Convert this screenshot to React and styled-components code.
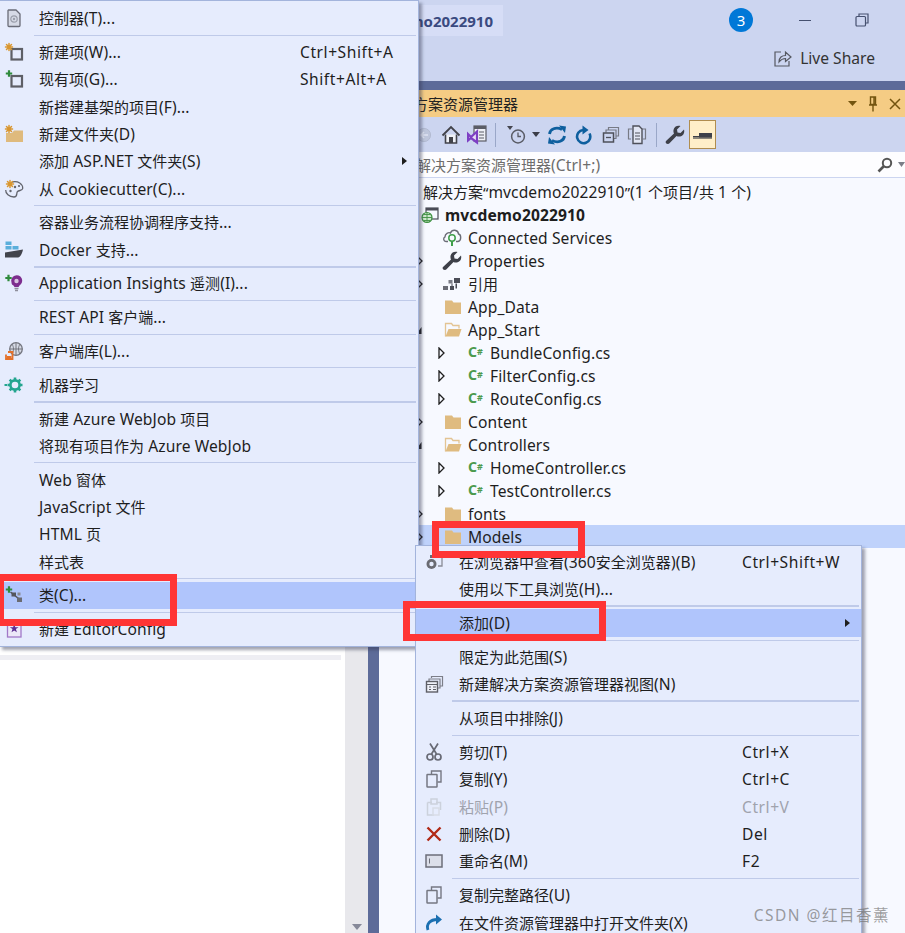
import React from "react";
import styled, { createGlobalStyle } from "styled-components";

const FONT = '"Noto Sans","Noto Sans CJK SC",sans-serif';

const Global = createGlobalStyle`
  html, body { margin: 0; padding: 0; background: #fff; }
  body { font-family: ${FONT}; font-size: 15px; color: #1e1e1e; }
`;

const Page = styled.div`
  position: relative;
  width: 905px;
  height: 933px;
  overflow: hidden;
  display: flex;
  flex-direction: column;
  background: #ccd5f0;
`;

/* Latin runs of the reference's UI font are wider than Noto Sans at the same size */
const Latin = styled.span`
  font-size: 15.6px;
  letter-spacing: ${(p) => p.$spacing ?? 0.1}px;
`;
const Txt = ({ children, spacing }) => (
  <>
    {String(children)
      .split(/([\u0000-\u024f]+)/)
      .filter(Boolean)
      .map((run, i) =>
        /^[\u0000-\u024f]/.test(run) ? (
          <Latin key={i} $spacing={spacing}>
            {run}
          </Latin>
        ) : (
          <span key={i}>{run}</span>
        )
      )}
  </>
);

/* ---------- title bar ---------- */
const TitleBar = styled.header`
  height: 81px;
  flex: none;
  display: grid;
  grid-template-columns: 503px 1fr;
  background: #ccd5f0;
`;
const TitleBox = styled.div`
  justify-self: end;
  height: 31px;
  margin-top: 5px;
  padding: 0 10px;
  display: flex;
  align-items: center;
  background: #d6ddf6;
  color: #3a4a80;
  font-weight: 700;
  font-size: 15px;
`;
const TitleRight = styled.div`
  display: flex;
  flex-direction: column;
`;
const WindowRow = styled.div`
  display: flex;
  align-items: center;
  height: 24px;
  margin-top: 8px;
  padding-left: 226px;
`;
const Badge = styled.div`
  width: 24px;
  height: 24px;
  border-radius: 50%;
  background: #0078d7;
  color: #fff;
  font-size: 15px;
  display: flex;
  align-items: center;
  justify-content: center;
`;
const MinimizeGlyph = styled.div`
  width: 12px;
  height: 1px;
  margin-left: 46px;
  background: #45506f;
`;
const RestoreSlot = styled.div`
  display: flex;
  margin-left: 44px;
`;
const ShareRow = styled.div`
  display: flex;
  align-items: center;
  justify-content: flex-end;
  gap: 8px;
  height: 24px;
  margin-top: 14px;
  padding-right: 30px;
  color: #333;
  font-size: 15px;
`;

/* ---------- workspace under the title bar ---------- */
const Workspace = styled.div`
  flex: 1;
  display: grid;
  grid-template-columns: 345px 23px 1fr;
  min-height: 0;
`;
const Editor = styled.div`
  background: #fff;
  padding-top: 574px;
`;
const EditorRule = styled.div`
  height: 5px;
  width: 341px;
  background: #eeeef3;
`;
const ScrollBar = styled.div`
  background: #e8e8ec;
  display: flex;
  flex-direction: column;
  justify-content: flex-end;
  align-items: center;
  padding-bottom: 3px;
`;
const ScrollArrow = styled.div`
  width: 0;
  height: 0;
  border-left: 5px solid transparent;
  border-right: 5px solid transparent;
  border-top: 6px solid #868999;
`;
const Explorer = styled.section`
  border-left: 11px solid #5d6b99;
  border-top: 9px solid #5d6b99;
  display: flex;
  flex-direction: column;
  background: #f7f9ff;
  min-height: 0;
`;
const ExplorerHeader = styled.div`
  height: 27px;
  flex: none;
  background: #f5cc84;
  display: flex;
  align-items: center;
  padding: 0 4px;
  color: #222;
  font-size: 15px;
`;
const HeaderTitle = styled.span`
  flex: 1;
`;
const HeaderIcons = styled.div`
  display: flex;
  align-items: center;
  gap: 11px;
`;
const Toolbar = styled.div`
  height: 35px;
  flex: none;
  background: #ccd5f0;
  display: flex;
  align-items: center;
  padding-left: 37px;
`;
const ToolIcon = styled.span`
  display: flex;
  width: ${(p) => p.$w || 18}px;
  height: 20px;
  margin-left: ${(p) => p.$gap || 0}px;
  align-items: center;
  justify-content: center;
`;
const ToolSep = styled.span`
  width: 1px;
  height: 24px;
  background: #9aa7c8;
  margin-left: ${(p) => p.$gap || 0}px;
`;
const ToggleButton = styled.span`
  width: 27px;
  height: 29px;
  box-sizing: border-box;
  margin-left: 4px;
  background: #ffefc9;
  border: 1px solid #b08d4f;
  display: flex;
  align-items: center;
  justify-content: center;
`;
const SearchBar = styled.div`
  height: 26px;
  flex: none;
  box-sizing: border-box;
  background: #fdfdff;
  border-bottom: 1px solid #ccd5f0;
  display: flex;
  align-items: center;
  padding: 0 0 0 7px;
  color: #6d6d6d;
  font-size: 15px;
`;
const SearchText = styled.span`
  flex: 1;
`;
const SearchIcons = styled.span`
  display: flex;
  align-items: center;
  gap: 5px;
`;
const Tree = styled.div`
  padding-top: 2px;
  display: flex;
  flex-direction: column;
`;
const TreeRow = styled.div`
  height: 23px;
  flex: none;
  display: flex;
  align-items: center;
  background: ${(p) => (p.$selected ? "#bfd2fb" : "transparent")};
  font-weight: ${(p) => (p.$bold ? 700 : 400)};
  font-size: 15px;
  white-space: nowrap;
`;
const TreeIndent = styled.div`
  display: flex;
  align-items: center;
  margin-left: ${(p) => p.$indent}px;
`;
const Expander = styled.span`
  width: 14px;
  height: 14px;
  display: flex;
  align-items: center;
  justify-content: center;
`;
const TreeIconSlot = styled.span`
  width: 42px;
  box-sizing: border-box;
  padding-right: 6px;
  display: flex;
  justify-content: flex-end;
  align-items: center;
`;
const CSharp = styled.span`
  width: 14px;
  margin-right: 2px;
  color: #4b9a4e;
  font-weight: 700;
  font-size: 14px;
  line-height: 15px;
  display: flex;
  align-items: baseline;
  & > small {
    font-size: 9px;
    position: relative;
    top: -2px;
  }
`;

/* ---------- context menus (float over everything) ---------- */
const Menu = styled.div`
  position: absolute;
  left: ${(p) => p.$left}px;
  top: ${(p) => p.$top}px;
  width: ${(p) => p.$width}px;
  box-sizing: border-box;
  padding-top: ${(p) => p.$padTop}px;
  padding-bottom: 3px;
  background: #e6ecfd;
  border: 1px solid #a3b4dc;
  box-shadow: 3px 3px 3px rgba(50, 55, 80, 0.45);
  z-index: 2;
`;
const MenuRow = styled.div`
  height: ${(p) => p.$rowH}px;
  display: grid;
  grid-template-columns: ${(p) => p.$iconCol}px 1fr ${(p) => p.$shortCol}px;
  align-items: center;
  background: ${(p) => (p.$active ? "#b0c5fc" : "transparent")};
  color: ${(p) => (p.$disabled ? "#a0a3ad" : "#1e1e1e")};
  font-size: 15px;
  white-space: nowrap;
`;
const MenuIcon = styled.span`
  display: flex;
  align-items: center;
  justify-content: center;
  width: ${(p) => p.$slot}px;
`;
const Shortcut = styled.span`
  display: flex;
  justify-content: space-between;
  align-items: center;
  padding-right: 11px;
`;
const Arrow = styled.span`
  margin-left: auto;
  width: 0;
  height: 0;
  border-top: 4px solid transparent;
  border-bottom: 4px solid transparent;
  border-left: 5px solid #1e1e1e;
`;
const MenuSep = styled.div`
  height: 6.5px;
  display: flex;
  align-items: center;
  padding-left: ${(p) => p.$inset}px;
  padding-right: 2px;
  &::after {
    content: "";
    flex: 1;
    height: ${(p) => (p.$thick ? 2 : 1)}px;
    background: #bfcae9;
  }
`;

/* ---------- red annotations and watermark ---------- */
const RedBox = styled.div`
  position: absolute;
  left: ${(p) => p.$x}px;
  top: ${(p) => p.$y}px;
  width: ${(p) => p.$w}px;
  height: ${(p) => p.$h}px;
  box-sizing: border-box;
  border: 7px solid #ff3535;
  border-left-width: ${(p) => p.$lw || 7}px;
  z-index: 3;
`;
const Watermark = styled.div`
  position: absolute;
  right: 15px;
  bottom: 7px;
  color: rgba(120, 120, 120, 0.72);
  font-size: 15.5px;
  letter-spacing: 1.5px;
  z-index: 4;
`;

/* ---------- icons ---------- */
const S = ({ w = 20, h = 20, children, vb }) => (
  <svg width={w} height={h} viewBox={vb || `0 0 ${w} ${h}`} fill="none" style={{ display: "block", flex: "none" }}>
    {children}
  </svg>
);
const Burst = ({ x, y }) => (
  <g stroke="#d9962f" strokeWidth="1.5" strokeLinecap="round">
    <path d={`M${x} ${y - 3.5}V${y + 3.5}M${x - 3.5} ${y}H${x + 3.5}M${x - 2.5} ${y - 2.5}L${x + 2.5} ${y + 2.5}M${x - 2.5} ${y + 2.5}L${x + 2.5} ${y - 2.5}`} />
  </g>
);
const Plus = ({ x, y, r = 3.2 }) => (
  <path d={`M${x} ${y - r}V${y + r}M${x - r} ${y}H${x + r}`} stroke="#2f8a3c" strokeWidth="2.2" />
);
const I = {
  controller: () => (
    <S>
      <path d="M4.5 2H12L16 6V17.5C16 18 15.6 18.5 15 18.5H5C4.5 18.5 4 18 4 17.5V2.5Z" fill="#d6dae6" stroke="#6a6c78" strokeWidth="1.3" />
      <circle cx="10" cy="11" r="3.2" stroke="#9a9eaa" strokeWidth="1.2" />
      <circle cx="10" cy="11" r="1.2" fill="#9a9eaa" />
    </S>
  ),
  newItem: () => (
    <S>
      <rect x="7.5" y="7" width="10.5" height="10.5" stroke="#5e5f66" strokeWidth="2.2" />
      <Burst x={5} y={5} />
    </S>
  ),
  existing: () => (
    <S>
      <rect x="7.5" y="7" width="10.5" height="10.5" stroke="#5e5f66" strokeWidth="2.2" />
      <Plus x={5} y={4.5} />
    </S>
  ),
  newFolder: () => (
    <S>
      <path d="M2 9H8L10 6.5H19V18H2Z" fill="#dfba7d" />
      <Burst x={5} y={5} />
    </S>
  ),
  cookie: () => (
    <S>
      <path d="M8 3C14 1.5 19 5 18.7 9.5C18.4 12 15 11 13.5 12.5C12 14 14 18 10 18C5 18 1.5 14.5 1.7 11" stroke="#63656e" strokeWidth="1.3" />
      <circle cx="6.5" cy="12" r="1.2" fill="#63656e" />
      <circle cx="11" cy="8" r="1.2" fill="#63656e" />
      <circle cx="15" cy="7" r="1.1" fill="#63656e" />
      <Burst x={6} y={5} />
    </S>
  ),
  docker: () => (
    <S>
      <rect x="1.5" y="1.5" width="6" height="3.5" fill="#5aaedb" />
      <rect x="1.5" y="6" width="6" height="3.5" fill="#5aaedb" />
      <rect x="8.5" y="6" width="6" height="3.5" fill="#5aaedb" />
      <path d="M1 12.5L19 9.5C18 14 16 17.5 14 17.5H1Z" fill="#42444c" />
    </S>
  ),
  insights: () => (
    <S>
      <path d="M7.5 9.5A5.5 5.5 0 1 1 15.5 12.5L14.5 14H10.5L9.5 12.5C8.3 12 7.5 11 7.5 9.5Z" fill="#7d2d8e" />
      <circle cx="12.5" cy="8" r="2.2" fill="#d8c3e0" />
      <path d="M10.5 15.5H14.5M11 17.5H14" stroke="#8f8f9c" strokeWidth="1.4" />
      <Plus x={4.5} y={5} />
    </S>
  ),
  client: () => (
    <S>
      <circle cx="12" cy="8" r="6.3" stroke="#74767f" strokeWidth="1.3" fill="#d7dbe6" />
      <path d="M5.7 8H18.3M12 1.7V14.3M8 3.2C10 6 10 10 8 13M16 3.2C14 6 14 10 16 13" stroke="#74767f" strokeWidth="1" />
      <path d="M4 11H8.5V18H2V13.5" stroke="#e4702a" strokeWidth="1.8" />
      <rect x="3" y="15" width="4.5" height="2.8" fill="#e4702a" />
    </S>
  ),
  ml: () => (
    <S>
      <g stroke="#24a58f" strokeWidth="2.6">
        <circle cx="11" cy="10" r="4.6" />
        <path d="M11 2.5V5M11 15V17.5M18.5 10H16M6 10H3.5M5.7 4.7L7.5 6.5M14.5 13.5L16.3 15.3M16.3 4.7L14.5 6.5M7.5 13.5L5.7 15.3" />
      </g>
      <path d="M0.5 10H3" stroke="#24a58f" strokeWidth="2" />
    </S>
  ),
  klass: () => (
    <S>
      <path d="M6.5 7L17.5 16" stroke="#55565c" strokeWidth="1.6" />
      <rect x="7.5" y="7.5" width="4.5" height="4" fill="#55565c" />
      <rect x="13" y="12.5" width="5" height="4.5" fill="#6a6b72" />
      <rect x="13.5" y="7.5" width="3" height="3" fill="#8a8b92" />
      <Plus x={5} y={4.5} />
    </S>
  ),
  editorConfig: () => (
    <S>
      <rect x="3.5" y="2" width="13.5" height="16" stroke="#a178c8" strokeWidth="1.3" fill="#ece8f8" />
      <path d="M10.2 5L11.3 8.2H14.6L11.9 10.1L12.9 13.3L10.2 11.4L7.5 13.3L8.5 10.1L5.8 8.2H9.1Z" fill="#5c2d91" />
    </S>
  ),
  browser: () => (
    <S>
      <circle cx="7.5" cy="12" r="5" fill="#6a6b72" />
      <circle cx="7.5" cy="12" r="2.2" fill="#e6ecfd" />
      <rect x="6" y="3" width="3" height="3" fill="#6a6b72" />
      <path d="M12 4H18V14H14" stroke="#8a8c96" strokeWidth="1.3" />
    </S>
  ),
  views: () => (
    <S>
      <path d="M7.5 4V2.5H18.5V12H16" stroke="#7c7e88" strokeWidth="1.2" />
      <path d="M5 7V5H16V14H14" stroke="#7c7e88" strokeWidth="1.2" />
      <rect x="2.5" y="7.5" width="11" height="10.5" stroke="#5e5f66" strokeWidth="1.4" fill="#eef0f8" />
      <path d="M3 10.5H13M5 13H7M9 13H12M5 15.5H7M9 15.5H12" stroke="#5e5f66" strokeWidth="1.1" />
    </S>
  ),
  scissors: () => (
    <S>
      <path d="M6 1.5L12.5 12M14 1.5L7.5 12" stroke="#686a75" strokeWidth="1.7" />
      <circle cx="6" cy="15" r="3" stroke="#686a75" strokeWidth="1.7" />
      <circle cx="14" cy="15" r="3" stroke="#686a75" strokeWidth="1.7" />
    </S>
  ),
  copy: () => (
    <S>
      <path d="M7.5 5V2H17V13H13.5" stroke="#757782" strokeWidth="1.4" />
      <rect x="3" y="5.5" width="10" height="12.5" rx="0.5" stroke="#757782" strokeWidth="1.5" />
    </S>
  ),
  paste: () => (
    <S>
      <path d="M3.5 5.5H8M12 5.5H16.5V13M3.5 5.5V18H10" stroke="#ccd1dc" strokeWidth="1.5" />
      <rect x="7" y="2" width="6" height="5" stroke="#ccd1dc" strokeWidth="1.5" />
      <rect x="9" y="11" width="6" height="7" stroke="#d8dce6" strokeWidth="1.5" />
    </S>
  ),
  del: () => (
    <S>
      <path d="M3.5 3.5L16.5 16.5M16.5 3.5L3.5 16.5" stroke="#b12a17" strokeWidth="2.4" />
    </S>
  ),
  rename: () => (
    <S w={18} h={18}>
      <rect x="1" y="3" width="16" height="12" fill="#dcdfea" stroke="#6c6e79" strokeWidth="1.5" />
      <path d="M4.5 6.5V11.5" stroke="#6c6e79" strokeWidth="1" />
    </S>
  ),
  openFolder: () => (
    <S>
      <path d="M4 17C2 11 6 6.5 13.5 6.5" stroke="#1b6fb1" strokeWidth="2.8" />
      <path d="M12 1.5L18 6.5L12 11.5Z" fill="#1b6fb1" />
    </S>
  ),
  home: () => (
    <S w={20} h={20}>
      <path d="M1.5 10.5L10 2L18.5 10.5" stroke="#414249" strokeWidth="1.8" />
      <path d="M4.5 9.5V18H15.5V9.5" fill="#eef0f6" stroke="#414249" strokeWidth="1.6" />
      <rect x="8" y="12" width="4" height="6" fill="#414249" />
    </S>
  ),
  back: () => (
    <S w={16} h={16}>
      <circle cx="8" cy="8" r="6.6" fill="#bec6dc" stroke="#b3bbd2" />
      <path d="M12 8H5M8 5L5 8L8 11" stroke="#dfe4f2" strokeWidth="1.5" />
    </S>
  ),
  vsDoc: () => (
    <S w={20} h={20}>
      <rect x="7" y="1" width="12" height="15" fill="#eef0f6" stroke="#5b5d66" strokeWidth="1.2" />
      <path d="M7 1H19V4H7Z" fill="#5b5d66" />
      <path d="M12 7H17M12 10H17M12 13H17" stroke="#5b5d66" />
      <path d="M1 9L4 12L10 6.5V17.5L4 13L1 15.5Z" stroke="#7d3fc4" strokeWidth="2.2" fill="#e6ddf5" />
    </S>
  ),
  clock: () => (
    <S w={20} h={20}>
      <path d="M0 1H6L3 5Z" fill="#454650" />
      <circle cx="11" cy="11.5" r="6.4" stroke="#5a5c66" strokeWidth="1.5" />
      <path d="M11 7.5V11.5H14" stroke="#5a5c66" strokeWidth="1.3" />
    </S>
  ),
  caretDown: ({ c = "#3b3d48", w = 8 }) => (
    <S w={w} h={5}>
      <path d={`M0 0H${w}L${w / 2} 5Z`} fill={c} />
    </S>
  ),
  sync: () => (
    <S w={20} h={20}>
      <path d="M2.5 9C3 4 9 1.5 15 4.5" stroke="#0e5f9e" strokeWidth="2.8" />
      <path d="M12 0.5L19 1.5L18 8Z" fill="#0e5f9e" />
      <path d="M17.5 11C17 16 11 18.5 5 15.5" stroke="#0e5f9e" strokeWidth="2.8" />
      <path d="M8 19.5L1 18.5L2 12Z" fill="#0e5f9e" />
    </S>
  ),
  refresh: () => (
    <S w={18} h={20}>
      <path d="M14.5 8.5A6.6 6.6 0 1 1 8 5" stroke="#0e5f9e" strokeWidth="2.6" />
      <path d="M7.5 0.5L13.5 5L7.5 9.5Z" fill="#0e5f9e" />
    </S>
  ),
  collapse: () => (
    <S w={18} h={18}>
      <path d="M6.5 4V1.5H16.5V10H14" stroke="#777a85" strokeWidth="1.2" />
      <path d="M4 6.5V4H14V12.5H12" stroke="#777a85" strokeWidth="1.2" />
      <rect x="1.5" y="7" width="10" height="9" stroke="#4e505a" strokeWidth="1.5" />
      <path d="M4 11.5H9" stroke="#4e505a" strokeWidth="1.3" />
    </S>
  ),
  pages: () => (
    <S w={20} h={20}>
      <path d="M5 4H1.5V14H4M15 4H18.5V14H16" stroke="#777a85" strokeWidth="1.2" />
      <path d="M6 1H12L15 4V18.5H6Z" fill="#e2e6f4" stroke="#4e505a" strokeWidth="1.4" />
      <path d="M8 8H13M8 11H13M8 14H13" stroke="#4e505a" />
    </S>
  ),
  wrench: ({ s = 20 }) => (
    <S w={s} h={s} vb="0 0 20 20">
      <path d="M19 4.5L15.5 8L12.5 7.5L12 4.5L15.5 1C12.5 0 9 1.5 8.5 5C8.3 6.5 8.6 7.5 9 8.5L1 16C0 17 1 19 3 19C3.5 19 4 18.7 4.5 18.2L11.5 11C12.5 11.5 13.5 11.7 15 11.5C18 11 20 8 19 4.5Z" fill="#3e4049" />
    </S>
  ),
  autoHide: () => (
    <S w={20} h={10}>
      <path d="M0 6.5H6" stroke="#3e4049" strokeWidth="1" />
      <rect x="6" y="3" width="13" height="4.5" fill="#3e4049" />
      <path d="M0 8H19" stroke="#3e4049" strokeWidth="1.2" />
    </S>
  ),
  headCaret: () => (
    <S w={9} h={5}>
      <path d="M0 0H9L4.5 5Z" fill="#73540f" />
    </S>
  ),
  pin: () => (
    <S w={10} h={16}>
      <path d="M2.5 1H7.5V8.5H2.5ZM1 9H9M5 9V15.5M6 1.5V8" stroke="#73540f" strokeWidth="1.4" />
    </S>
  ),
  close: () => (
    <S w={12} h={12}>
      <path d="M1 1L11 11M11 1L1 11" stroke="#73540f" strokeWidth="1.5" />
    </S>
  ),
  lens: () => (
    <S w={16} h={16}>
      <circle cx="10" cy="6" r="4.2" stroke="#555" strokeWidth="2" />
      <path d="M7 9L1.5 14.5" stroke="#555" strokeWidth="2.6" />
    </S>
  ),
  restore: () => (
    <S w={14} h={14}>
      <path d="M4 3V1H13V10H10.5" stroke="#45506f" strokeWidth="1.2" />
      <rect x="1" y="3.5" width="9.5" height="9.5" rx="1" stroke="#45506f" strokeWidth="1.2" />
    </S>
  ),
  share: () => (
    <S w={18} h={18}>
      <path d="M7 3H1V17H15V12" stroke="#555861" strokeWidth="1.2" />
      <path d="M5 13C5 8.5 8 6.5 11.5 6.5V3L17 8L11.5 12.5V9.5C9 9.5 7 10.5 5 13Z" stroke="#555861" strokeWidth="1.2" />
    </S>
  ),
  project: () => (
    <S w={18} h={18}>
      <rect x="5" y="2" width="12" height="11" stroke="#4a4c56" strokeWidth="1.2" fill="#f7f9ff" />
      <path d="M5 2H17V4.5H5Z" fill="#4a4c56" />
      <circle cx="6" cy="11.5" r="5" fill="#cfe8cf" stroke="#3f9142" strokeWidth="1.2" />
      <path d="M1 11.5H11M6 6.5V16.5M3 8.5H9M3 14.5H9" stroke="#3f9142" strokeWidth="0.9" />
    </S>
  ),
  cloud: () => (
    <S>
      <path d="M6 15.5H4C1.5 15.5 0.8 12 3 10.8C3 7.5 6.5 6 8.5 7C10 3 16 3.5 16.5 8C19.5 8.5 19.5 15 16 15.5H14" stroke="#6a6c76" strokeWidth="1.4" transform="translate(0 -2)" />
      <circle cx="10" cy="10" r="3.2" stroke="#3f9e4a" strokeWidth="1.5" />
      <path d="M10 13V18" stroke="#3f9e4a" strokeWidth="2" />
    </S>
  ),
  refs: () => (
    <S w={20} h={20}>
      <rect x="12" y="4" width="6" height="5" fill="#4b4d57" />
      <rect x="6.5" y="6" width="4" height="3.5" fill="#7a7c86" />
      <rect x="1" y="12" width="5" height="4" fill="#6a6c76" />
      <rect x="8" y="12" width="4" height="4" fill="#4b4d57" />
      <path d="M10 9.5V12" stroke="#4b4d57" />
      <rect x="13.5" y="9.5" width="1.5" height="5" fill="#4b4d57" />
    </S>
  ),
  folder: ({ c = "#dfbb80" }) => (
    <S w={18} h={16}>
      <path d="M1 1.5H8L9.5 3.5H17V15H1Z" fill={c} />
    </S>
  ),
  folderOpen: () => (
    <S w={18} h={16}>
      <path d="M1.5 14.5V1.5H7.5L9 3.5H15V6.5" stroke="#e3c493" strokeWidth="1.3" fill="#f7f9ff" />
      <path d="M1.5 14.5L4.5 7H17.5L15 14.5Z" fill="#dfbb80" />
    </S>
  ),
  triangle: ({ open }) =>
    open ? (
      <S w={7} h={12}>
        <path d="M5.5 3V10H0.5Z" fill="#1e1e1e" />
      </S>
    ) : (
      <S w={7} h={12}>
        <path d="M1 1L6 6L1 11Z" stroke="#1e1e1e" strokeWidth="1.3" />
      </S>
    ),
};

/* ---------- data ---------- */
const leftMenu = [
  { icon: "controller", label: "控制器(T)..." },
  { sep: true },
  { icon: "newItem", label: "新建项(W)...", short: "Ctrl+Shift+A" },
  { icon: "existing", label: "现有项(G)...", short: "Shift+Alt+A" },
  { label: "新搭建基架的项目(F)..." },
  { icon: "newFolder", label: "新建文件夹(D)" },
  { label: "添加 ASP.NET 文件夹(S)", arrow: true },
  { icon: "cookie", label: "从 Cookiecutter(C)..." },
  { sep: true },
  { label: "容器业务流程协调程序支持..." },
  { icon: "docker", label: "Docker 支持..." },
  { sep: true, thick: true },
  { icon: "insights", label: "Application Insights 遥测(I)..." },
  { sep: true },
  { label: "REST API 客户端..." },
  { sep: true },
  { icon: "client", label: "客户端库(L)..." },
  { sep: true },
  { icon: "ml", label: "机器学习" },
  { sep: true, thick: true },
  { label: "新建 Azure WebJob 项目" },
  { label: "将现有项目作为 Azure WebJob" },
  { sep: true },
  { label: "Web 窗体" },
  { label: "JavaScript 文件" },
  { label: "HTML 页" },
  { label: "样式表" },
  { sep: true },
  { icon: "klass", label: "类(C)...", active: true },
  { sep: true },
  { icon: "editorConfig", label: "新建 EditorConfig" },
];

const rightMenu = [
  { icon: "browser", label: "在浏览器中查看(360安全浏览器)(B)", short: "Ctrl+Shift+W" },
  { label: "使用以下工具浏览(H)..." },
  { sep: true, thick: true },
  { label: "添加(D)", arrow: true, active: true },
  { sep: true },
  { label: "限定为此范围(S)" },
  { icon: "views", label: "新建解决方案资源管理器视图(N)" },
  { sep: true, thick: true },
  { label: "从项目中排除(J)" },
  { sep: true },
  { icon: "scissors", label: "剪切(T)", short: "Ctrl+X" },
  { icon: "copy", label: "复制(Y)", short: "Ctrl+C" },
  { icon: "paste", label: "粘贴(P)", short: "Ctrl+V", disabled: true },
  { icon: "del", label: "删除(D)", short: "Del" },
  { icon: "rename", label: "重命名(M)", short: "F2" },
  { sep: true },
  { icon: "copy", label: "复制完整路径(U)" },
  { icon: "openFolder", label: "在文件资源管理器中打开文件夹(X)" },
];

const treeRows = [
  { level: 0, text: "解决方案“mvcdemo2022910”(1 个项目/共 1 个)" },
  { level: 1, text: "mvcdemo2022910", icon: "project", bold: true },
  { level: 2, text: "Connected Services", icon: "cloud" },
  { level: 2, text: "Properties", icon: "wrench", exp: "closed" },
  { level: 2, text: "引用", icon: "refs", exp: "closed" },
  { level: 2, text: "App_Data", icon: "folder" },
  { level: 2, text: "App_Start", icon: "folderOpen", exp: "open" },
  { level: 3, text: "BundleConfig.cs", cs: true, exp: "closed" },
  { level: 3, text: "FilterConfig.cs", cs: true, exp: "closed" },
  { level: 3, text: "RouteConfig.cs", cs: true, exp: "closed" },
  { level: 2, text: "Content", icon: "folder", exp: "closed" },
  { level: 2, text: "Controllers", icon: "folderOpen", exp: "open" },
  { level: 3, text: "HomeController.cs", cs: true, exp: "closed" },
  { level: 3, text: "TestController.cs", cs: true, exp: "closed" },
  { level: 2, text: "fonts", icon: "folder", exp: "closed" },
  { level: 2, text: "Models", icon: "folder", exp: "closed", selected: true },
];
const INDENT = [-12, 10, 33, 55];

const ContextMenu = ({ items, left, top, width, padTop, rowH, iconCol, iconSlot, shortCol, inset }) => (
  <Menu $left={left} $top={top} $width={width} $padTop={padTop}>
    {items.map((it, i) => {
      if (it.sep) return <MenuSep key={i} $thick={it.thick} $inset={inset} />;
      const Ico = it.icon ? I[it.icon] : null;
      return (
        <MenuRow key={i} $rowH={rowH} $active={it.active} $disabled={it.disabled} $iconCol={iconCol} $shortCol={shortCol}>
          <MenuIcon $slot={iconSlot}>{Ico && <Ico />}</MenuIcon>
          <span>
            <Txt>{it.label}</Txt>
          </span>
          <Shortcut>
            {it.short && (
              <span>
                <Txt spacing={0.55}>{it.short}</Txt>
              </span>
            )}
            {it.arrow && <Arrow />}
          </Shortcut>
        </MenuRow>
      );
    })}
  </Menu>
);

export default function App() {
  return (
    <Page>
      <Global />
      <TitleBar>
        <TitleBox>mvcdemo2022910</TitleBox>
        <TitleRight>
          <WindowRow>
            <Badge>3</Badge>
            <MinimizeGlyph />
            <RestoreSlot>
              <I.restore />
            </RestoreSlot>
          </WindowRow>
          <ShareRow>
            <I.share />
            <Txt spacing={0}>Live Share</Txt>
          </ShareRow>
        </TitleRight>
      </TitleBar>
      <Workspace>
        <Editor>
          <EditorRule />
        </Editor>
        <ScrollBar>
          <ScrollArrow />
        </ScrollBar>
        <Explorer>
          <ExplorerHeader>
            <HeaderTitle>解决方案资源管理器</HeaderTitle>
            <HeaderIcons>
              <I.headCaret />
              <I.pin />
              <I.close />
            </HeaderIcons>
          </ExplorerHeader>
          <Toolbar>
            <ToolIcon $w={16}><I.back /></ToolIcon>
            <ToolIcon $w={20} $gap={9}><I.home /></ToolIcon>
            <ToolIcon $w={20} $gap={6}><I.vsDoc /></ToolIcon>
            <ToolSep $gap={8} />
            <ToolIcon $w={20} $gap={11}><I.clock /></ToolIcon>
            <ToolIcon $w={8} $gap={5}><I.caretDown /></ToolIcon>
            <ToolIcon $w={20} $gap={7}><I.sync /></ToolIcon>
            <ToolIcon $w={18} $gap={8}><I.refresh /></ToolIcon>
            <ToolIcon $w={18} $gap={9}><I.collapse /></ToolIcon>
            <ToolIcon $w={20} $gap={7}><I.pages /></ToolIcon>
            <ToolSep $gap={9} />
            <ToolIcon $w={20} $gap={8}><I.wrench /></ToolIcon>
            <ToggleButton><I.autoHide /></ToggleButton>
          </Toolbar>
          <SearchBar>
            <SearchText>
              <Txt>搜索解决方案资源管理器(Ctrl+;)</Txt>
            </SearchText>
            <SearchIcons>
              <I.lens />
              <I.caretDown c="#7b7e88" w={7} />
            </SearchIcons>
          </SearchBar>
          <Tree>
            {treeRows.map((r) => {
              const Ico = r.icon ? I[r.icon] : null;
              return (
                <TreeRow key={r.text} $selected={r.selected} $bold={r.bold}>
                  <TreeIndent $indent={INDENT[r.level]}>
                    <Expander>{r.exp && <I.triangle open={r.exp === "open"} />}</Expander>
                    <TreeIconSlot>
                      {Ico && <Ico />}
                      {r.cs && (
                        <CSharp>
                          C<small>#</small>
                        </CSharp>
                      )}
                    </TreeIconSlot>
                    <span>
                      <Txt>{r.text}</Txt>
                    </span>
                  </TreeIndent>
                </TreeRow>
              );
            })}
          </Tree>
        </Explorer>
      </Workspace>

      <ContextMenu items={leftMenu} left={-1} top={0} width={420} padTop={3.6} rowH={27.3} iconCol={39} iconSlot={28} shortCol={118} inset={34} />
      <ContextMenu items={rightMenu} left={415} top={545} width={447} padTop={2.3} rowH={27.35} iconCol={43} iconSlot={36} shortCol={119} inset={36} />

      <RedBox $x={0} $y={574} $w={177} $h={52} $lw={4} />
      <RedBox $x={432} $y={521} $w={153} $h={37} />
      <RedBox $x={403} $y={601} $w={203} $h={40} />
      <Watermark>CSDN @红目香薰</Watermark>
    </Page>
  );
}
